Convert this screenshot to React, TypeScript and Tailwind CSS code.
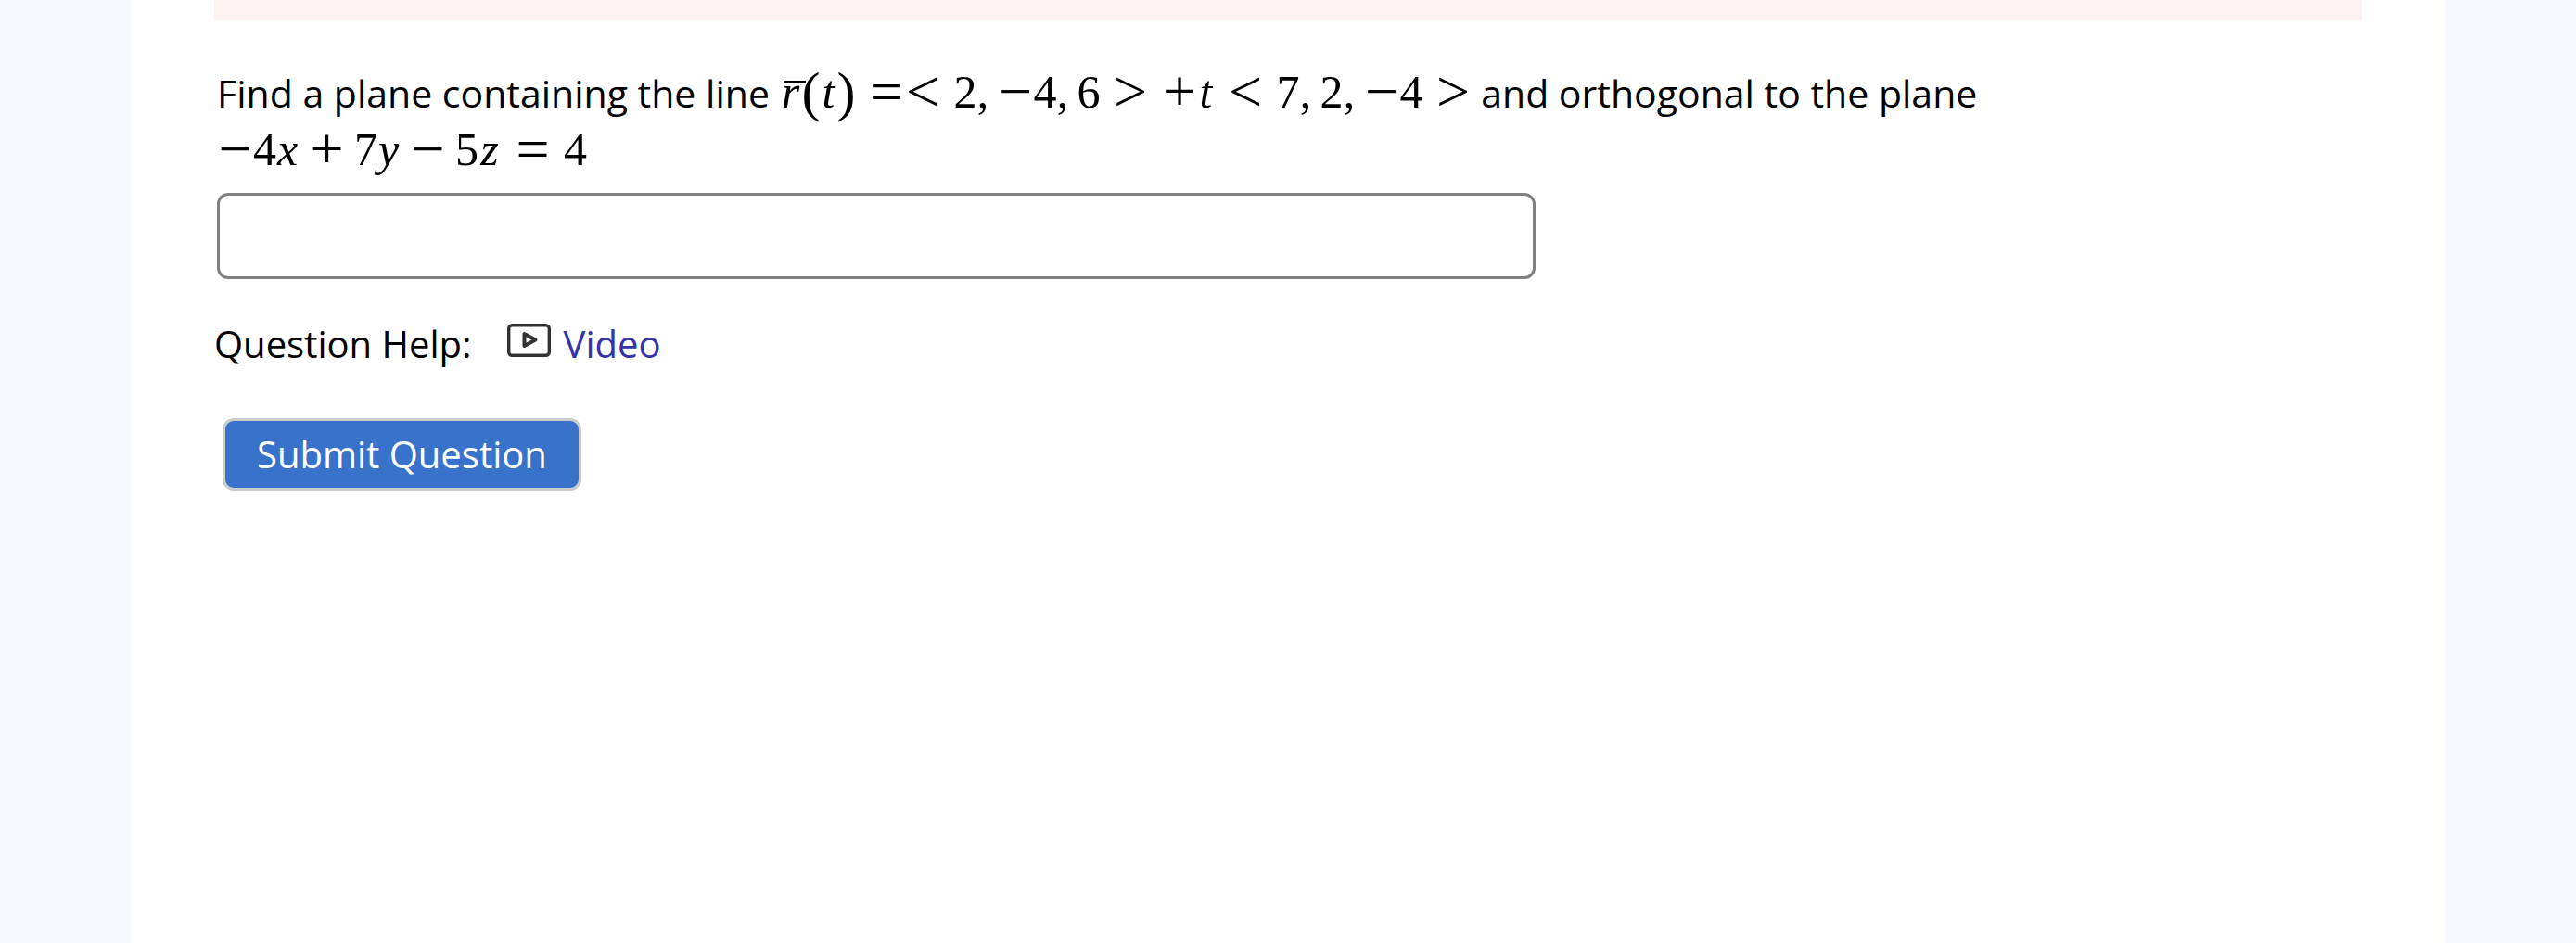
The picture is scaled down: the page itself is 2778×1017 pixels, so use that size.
import { useState, type FormEvent, type ReactNode } from 'react';

// Inline formula, never broken across lines
function Formula({ label, children }: { label: string; children: ReactNode }) {
  return (
    <span
      role="math"
      aria-label={label}
      className="inline-flex items-baseline whitespace-nowrap font-['Liberation_Serif',serif] text-[50px] leading-[60px]"
    >
      {children}
    </span>
  );
}

function Num({ children }: { children: ReactNode }) {
  return <span className="w-6 text-center">{children}</span>;
}

function Var({ children }: { children: ReactNode }) {
  return <span className="w-[26px] text-center italic">{children}</span>;
}

function Param() {
  return <span className="w-[18px] text-center italic">t</span>;
}

function Paren({ children }: { children: ReactNode }) {
  return <span className="w-5 self-center text-center text-[60px] leading-[60px]">{children}</span>;
}

// Operators share one cell width and sit on the math axis
function Op({ children }: { children: ReactNode }) {
  return (
    <span className="flex w-[39px] justify-center self-center text-[64px] leading-[60px]">{children}</span>
  );
}

function Comma() {
  return <span className="mr-2 w-[15px] text-center">,</span>;
}

// Space around a relation / a binary operator
function Thick() {
  return <span className="w-3.5" />;
}

function Medium() {
  return <span className="w-2.5" />;
}

function LineFormula() {
  return (
    <Formula label="r(t) = <2, -4, 6> + t <7, 2, -4>">
      <span className="relative w-6 text-center italic">
        r
        <span className="absolute top-[18px] left-1 h-[3px] w-6 bg-black" />
      </span>
      <Paren>(</Paren>
      <Param />
      <Paren>)</Paren>
      <Thick />
      <Op>=</Op>
      <Op>&lt;</Op>
      <Thick />
      <Num>2</Num>
      <Comma />
      <Op>−</Op>
      <Num>4</Num>
      <Comma />
      <Num>6</Num>
      <Thick />
      <Op>&gt;</Op>
      <Thick />
      <Op>+</Op>
      <Param />
      <Thick />
      <Op>&lt;</Op>
      <Thick />
      <Num>7</Num>
      <Comma />
      <Num>2</Num>
      <Comma />
      <Op>−</Op>
      <Num>4</Num>
      <Thick />
      <Op>&gt;</Op>
    </Formula>
  );
}

function PlaneFormula() {
  return (
    <Formula label="-4x + 7y - 5z = 4">
      <Op>−</Op>
      <Num>4</Num>
      <Var>x</Var>
      <Medium />
      <Op>+</Op>
      <Medium />
      <Num>7</Num>
      <Var>y</Var>
      <Medium />
      <Op>−</Op>
      <Medium />
      <Num>5</Num>
      <Var>z</Var>
      <Thick />
      <Op>=</Op>
      <Thick />
      <Num>4</Num>
    </Formula>
  );
}

function VideoIcon() {
  return (
    <svg viewBox="0 0 47 36" className="mr-3.5 mb-2 h-9 w-[47px]" fill="none" stroke="#333333" aria-hidden="true">
      <rect x="1.7" y="1.7" width="43.6" height="32.6" rx="3.5" strokeWidth="3.4" />
      <path d="M18.5 11v13l12-6.500z" strokeWidth="4" strokeLinejoin="round" />
    </svg>
  );
}

export default function App() {
  const [answer, setAnswer] = useState('');

  const handleSubmit = (e: FormEvent) => {
    e.preventDefault();
  };

  return (
    <div className="min-h-screen bg-[#f7f7ff] px-[141px] font-['Open_Sans',sans-serif] text-[40px] leading-[60px] text-black">
      <main className="min-h-screen bg-white px-[90px]">
        {/* Bottom of the notice banner */}
        <div className="h-[22px] bg-[#fdf2f1]" />

        <form onSubmit={handleSubmit} className="pt-[47px]">
          <div className="px-[3px]">
            <label htmlFor="answer" className="block text-[41px] leading-[62px]">
              Find a plane containing the line <LineFormula /> and orthogonal to the plane
              <br />
              <PlaneFormula />
            </label>
            <input
              id="answer"
              type="text"
              value={answer}
              onChange={(e) => setAnswer(e.target.value)}
              className="mt-[15px] block h-[93px] w-full max-w-[1422px] rounded-xl border-3 border-[#808080] bg-white px-4"
            />
          </div>

          <div className="mt-10 flex items-center">
            <span className="mr-[38px]">Question Help:</span>
            <a href="#video" className="flex items-center text-[#3333aa]">
              <VideoIcon />
              Video
            </a>
          </div>

          <button
            type="submit"
            className="mt-[50px] ml-[9px] h-[78px] rounded-xl border-3 border-[#cccccc] bg-[#3872cb] px-[34px] text-white"
          >
            Submit Question
          </button>
        </form>
      </main>
    </div>
  );
}
